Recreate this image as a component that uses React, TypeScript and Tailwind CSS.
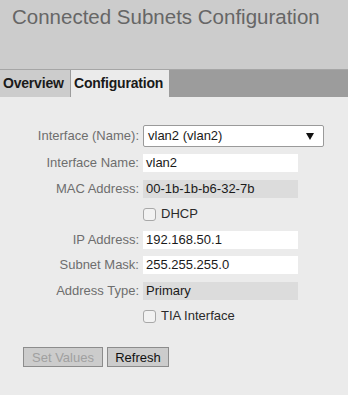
import React from 'react';

const font = { fontFamily: '"Liberation Sans", Arial, sans-serif' };

interface RowProps {
  label?: string;
  children: React.ReactNode;
  tall?: boolean;
}

const Row: React.FC<RowProps> = ({ label, children, tall }) => (
  <div className={`flex items-center ${tall ? 'h-[22px]' : 'h-[18px]'}`}>
    <div className="w-[140px] shrink-0 pr-[1px] text-right text-[13px] text-[#6e6e6e]">
      {label ? `${label}:` : ''}
    </div>
    <div className="ml-[3px] flex h-full items-center">{children}</div>
  </div>
);

const TextField = ({ value }: { value: string }) => (
  <div className="flex h-[18px] w-[155px] items-center bg-white pl-[3px] text-[13px] text-[#1a1a1a]">{value}</div>
);

const ReadOnly = ({ value }: { value: string }) => (
  <div className="flex h-[18px] w-[155px] items-center bg-[#dcdcdc] pl-[3px] text-[13px] text-[#1a1a1a]">{value}</div>
);

const Check = ({ label }: { label: string }) => (
  <div className="flex items-center gap-[5px]">
    <span className="block h-[13px] w-[13px] rounded-[3px] border border-[#a8a8a8] bg-[#f2f2f2]" />
    <span className="text-[13px] text-[#2a2a2a]">{label}</span>
  </div>
);

const App: React.FC = () => {
  return (
    <div className="min-h-[395px] w-full bg-[#ebebeb]" style={font}>
      {/* header */}
      <div className="h-[69px] bg-[#cccccc] pl-[12px] pt-[5px]">
        <h1 className="text-[20.5px] leading-[24px] text-[#666666]">Connected Subnets Configuration</h1>
      </div>

      {/* tabs */}
      <div className="flex h-[28px] gap-[1px] border-t border-[#a6a6a6] bg-[#9c9c9c]">
        <div className="flex w-[70px] items-center bg-[#cccccc] pl-[3px] text-[14px] font-bold tracking-[-0.2px] text-[#1a1a1a]">
          Overview
        </div>
        <div className="flex w-[98px] items-center bg-[#ebebeb] pl-[3px] text-[14px] font-bold tracking-[-0.2px] text-[#1a1a1a]">
          Configuration
        </div>
      </div>

      {/* form */}
      <div className="flex flex-col pt-[28px]">
        <Row label="Interface (Name)" tall>
          <div className="flex h-[22px] w-[181px] items-center justify-between rounded-[2px] border border-[#9a9a9a] bg-white pl-[4px] pr-[9px] text-[13px] text-[#1a1a1a]">
            <span>vlan2 (vlan2)</span>
            <svg width="8" height="7" viewBox="0 0 8 7">
              <path d="M0 0H8L4 7Z" fill="#111" />
            </svg>
          </div>
        </Row>
        <div className="mt-[7px] flex flex-col gap-[7.5px]">
          <Row label="Interface Name">
            <TextField value="vlan2" />
          </Row>
          <Row label="MAC Address">
            <ReadOnly value="00-1b-1b-b6-32-7b" />
          </Row>
          <Row>
            <Check label="DHCP" />
          </Row>
          <Row label="IP Address">
            <TextField value="192.168.50.1" />
          </Row>
          <Row label="Subnet Mask">
            <TextField value="255.255.255.0" />
          </Row>
          <Row label="Address Type">
            <ReadOnly value="Primary" />
          </Row>
          <Row>
            <Check label="TIA Interface" />
          </Row>
        </div>

        <div className="mt-[22px] flex gap-[4px] pl-[23px]">
          <button className="h-[20px] w-[80px] border border-[#8c8c8c] bg-[#cccccc] text-[13px] text-[#a0a0a0]">
            Set Values
          </button>
          <button className="h-[20px] w-[62px] border border-[#8c8c8c] bg-[#cccccc] text-[13px] text-[#111]">
            Refresh
          </button>
        </div>
      </div>
    </div>
  );
};

export default App;
